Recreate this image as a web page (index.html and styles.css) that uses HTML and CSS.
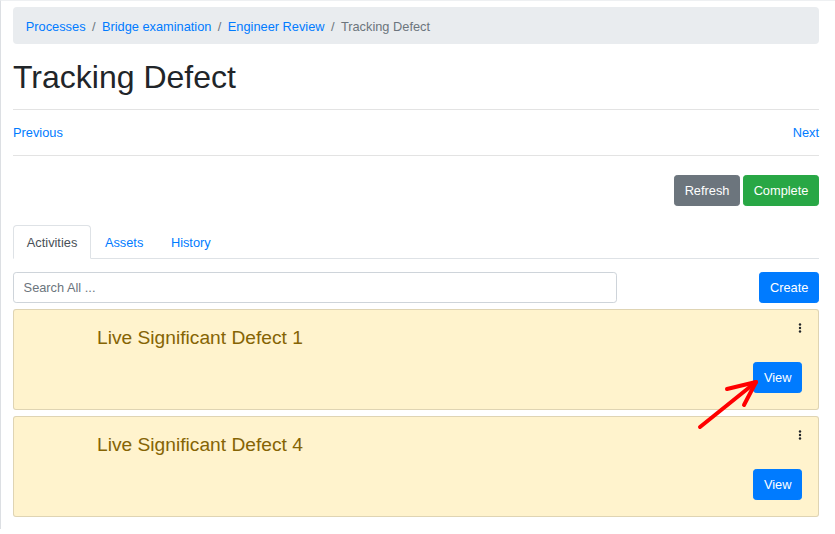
FILE: index.html
```html
<!DOCTYPE html>
<html lang="en">
<head>
<meta charset="utf-8">
<title>Tracking Defect</title>
<link rel="stylesheet" href="styles.css">
</head>
<body>
<div class="frame">
  <nav class="breadcrumb">
    <a href="#">Processes</a><span class="sep">/</span><a href="#">Bridge examination</a><span class="sep">/</span><a href="#">Engineer Review</a><span class="sep">/</span><span class="active">Tracking Defect</span>
  </nav>
  <h1 class="title">Tracking Defect</h1>
  <hr class="rule">
  <div class="pager">
    <a href="#">Previous</a>
    <a href="#">Next</a>
  </div>
  <hr class="rule">
  <div class="actions">
    <button class="btn btn-secondary">Refresh</button>
    <button class="btn btn-success">Complete</button>
  </div>
  <ul class="tabs">
    <li><a href="#" class="tab active">Activities</a></li>
    <li><a href="#" class="tab">Assets</a></li>
    <li><a href="#" class="tab">History</a></li>
  </ul>
  <div class="searchrow">
    <input class="search" type="text" placeholder="Search All ...">
    <button class="btn btn-primary">Create</button>
  </div>
  <div class="card">
    <div class="card-head">
      <h5 class="card-title">Live Significant Defect 1</h5>
      <svg class="kebab" width="4" height="10" viewBox="0 0 4 10"><circle cx="2" cy="1.5" r="1.2"/><circle cx="2" cy="5" r="1.2"/><circle cx="2" cy="8.5" r="1.2"/></svg>
    </div>
    <div class="card-foot"><button class="btn btn-primary">View</button></div>
  </div>
  <div class="card">
    <div class="card-head">
      <h5 class="card-title">Live Significant Defect 4</h5>
      <svg class="kebab" width="4" height="10" viewBox="0 0 4 10"><circle cx="2" cy="1.5" r="1.2"/><circle cx="2" cy="5" r="1.2"/><circle cx="2" cy="8.5" r="1.2"/></svg>
    </div>
    <div class="card-foot"><button class="btn btn-primary">View</button></div>
  </div>
</div>
<svg class="annotation" width="835" height="534" viewBox="0 0 835 534">
  <g stroke="#ff0000" stroke-width="4" stroke-linecap="round" fill="none">
    <line x1="700" y1="427" x2="756" y2="382"/>
    <line x1="756" y1="382" x2="727" y2="389"/>
    <line x1="756" y1="382" x2="744" y2="405"/>
  </g>
</svg>
</body>
</html>
```

FILE: styles.css
```css
html, body {
  margin: 0;
  padding: 0;
}
body {
  position: relative;
  width: 835px;
  height: 534px;
  overflow: hidden;
  background: #fff;
  font-family: "Liberation Sans", Arial, sans-serif;
  font-size: 12.8px;
  line-height: 19.2px;
  color: #212529;
}
a {
  color: #007bff;
  text-decoration: none;
}
.frame {
  box-sizing: border-box;
  height: 529px;
  border-left: 1px solid #dcdfe3;
  border-top: 1px solid #eef0f2;
  padding: 6px 16px 0 12px;
}
.breadcrumb {
  background: #e9ecef;
  border-radius: 4px;
  padding: 9.5px 12.8px 8.5px;
  line-height: 19px;
}
.breadcrumb .sep {
  color: #6c757d;
  padding: 0 6.4px;
}
.breadcrumb .active {
  color: #6c757d;
}
.title {
  margin: 14px 0 0;
  font-size: 32px;
  line-height: 38px;
  font-weight: 400;
}
.rule {
  margin: 13px 0 0;
  border: 0;
  border-top: 1px solid #e3e3e3;
  height: 0;
}
.pager + .rule {
  margin-top: 0;
}
.pager {
  display: flex;
  justify-content: space-between;
  padding: 13px 0;
  line-height: 19px;
}
.actions {
  display: flex;
  justify-content: flex-end;
  gap: 3px;
  margin-top: 19px;
}
.btn {
  font-family: inherit;
  font-size: 12.8px;
  line-height: 19.2px;
  padding: 4.8px 9.6px;
  border: 1px solid transparent;
  border-radius: 3.2px;
  color: #fff;
  cursor: pointer;
}
.btn-secondary { background: #6c757d; border-color: #6c757d; }
.btn-success { background: #28a745; border-color: #28a745; }
.btn-primary { background: #007bff; border-color: #007bff; }
.tabs {
  list-style: none;
  margin: 19px 0 0;
  padding: 0;
  display: flex;
  border-bottom: 1px solid #dee2e6;
}
.tabs li {
  margin-bottom: -1px;
}
.tab {
  display: block;
  padding: 7px 12.8px 6px;
  line-height: 19px;
  border: 1px solid transparent;
  border-radius: 4px 4px 0 0;
}
.tab.active {
  color: #495057;
  background: #fff;
  border-color: #dee2e6 #dee2e6 #fff;
}
.searchrow {
  display: flex;
  justify-content: space-between;
  margin-top: 13px;
}
.search {
  box-sizing: border-box;
  width: 604px;
  height: 31px;
  padding: 4.8px 9.6px;
  font-family: inherit;
  font-size: 12.8px;
  color: #495057;
  border: 1px solid #ced4da;
  border-radius: 3.2px;
  outline: none;
}
.search::placeholder {
  color: #6c757d;
}
.card {
  box-sizing: border-box;
  height: 101px;
  margin-top: 6px;
  background: #fff3cd;
  border: 1px solid rgba(0, 0, 0, 0.125);
  border-radius: 3px;
  padding: 16px 16px 16px 83px;
  display: flex;
  flex-direction: column;
  justify-content: space-between;
}
.card-head {
  display: flex;
  justify-content: space-between;
  align-items: flex-start;
}
.card-title {
  margin: 0;
  font-size: 19.2px;
  line-height: 23.4px;
  font-weight: 400;
  color: #856404;
}
.kebab {
  display: block;
  margin-top: -3px;
  fill: #212529;
}
.card-foot {
  display: flex;
  justify-content: flex-end;
}
.annotation {
  position: absolute;
  left: 0;
  top: 0;
  pointer-events: none;
}
```
